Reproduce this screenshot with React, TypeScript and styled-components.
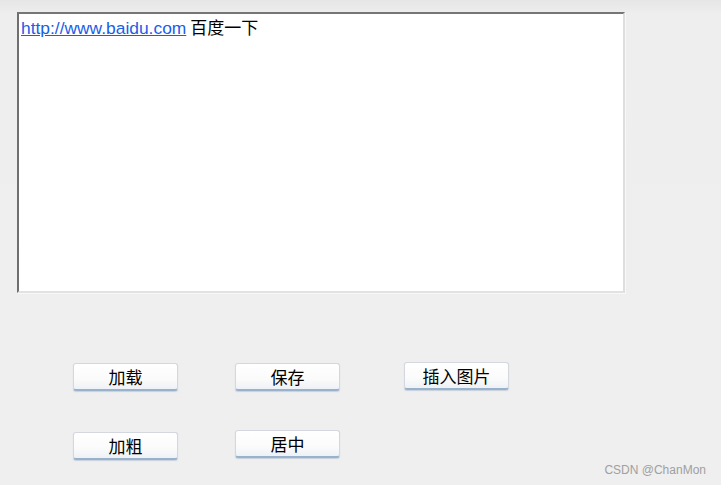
import React from "react";
import styled, { createGlobalStyle } from "styled-components";

const Global = createGlobalStyle`
  html, body { margin: 0; padding: 0; }
  body {
    background: linear-gradient(#e6e6e6 0px, #eeeeee 14px, #efefef 100%);
    font-family: "Liberation Sans", "Noto Sans CJK SC", sans-serif;
    width: 721px;
    height: 485px;
    overflow: hidden;
  }
`;

const Page = styled.div`
  position: relative;
  width: 721px;
  height: 485px;
  box-sizing: border-box;
  padding: 12px 0 0 17px;
  display: flex;
  flex-direction: column;
`;

const Editor = styled.div`
  width: 608px;
  height: 281px;
  box-sizing: border-box;
  background: #ffffff;
  border-top: 2px solid #767676;
  border-left: 2px solid #6f6f6f;
  border-right: 2px solid #dedede;
  border-bottom: 2px solid #e2e2e2;
  box-shadow: 1px 1px 0 #f8f8f8;
  padding: 2px 2px;
  font-size: 17.4px;
  line-height: 22px;
  color: #000;
`;

const Link = styled.a`
  color: #1a5ee6;
  text-decoration: underline;
  font-family: "Liberation Sans", Arial, sans-serif;
`;

const Plain = styled.span`
  font-family: "Noto Sans CJK SC", sans-serif;
  font-size: 17px;
  margin-left: -1px;
`;

const ButtonGrid = styled.div`
  margin: 70px 0 0 56px;
  display: grid;
  grid-template-columns: 162px 169px 104px;
  grid-auto-rows: 28px;
  row-gap: 40px;
`;

const Button = styled.button<{ $dy?: number }>`
  width: 105px;
  height: 28px;
  margin-top: ${(p) => p.$dy ?? 0}px;
  padding: 0;
  box-sizing: border-box;
  border: 1px solid #d4d8de;
  border-bottom: 2px solid #98b2cc;
  border-radius: 3px;
  background: linear-gradient(#ffffff 0%, #fbfbfb 60%, #eef1f5 100%);
  box-shadow: 0 1px 1px rgba(110, 140, 180, 0.3);
  font-family: "Noto Sans CJK SC", sans-serif;
  font-size: 17px;
  font-weight: 400;
  line-height: 26px;
  color: #000;
  cursor: default;
`;

const Watermark = styled.div`
  position: absolute;
  right: 15px;
  bottom: 8px;
  font-family: "Liberation Sans", Arial, sans-serif;
  font-size: 12px;
  color: #a0a0a0;
`;

export default function App() {
  return (
    <>
      <Global />
      <Page>
        <Editor>
          <Link href="#">http://www.baidu.com</Link> <Plain>百度一下</Plain>
        </Editor>
        <ButtonGrid>
          <Button>加载</Button>
          <Button>保存</Button>
          <Button $dy={-1}>插入图片</Button>
          <Button $dy={1}>加粗</Button>
          <Button $dy={-1}>居中</Button>
        </ButtonGrid>
        <Watermark>CSDN @ChanMon</Watermark>
      </Page>
    </>
  );
}
